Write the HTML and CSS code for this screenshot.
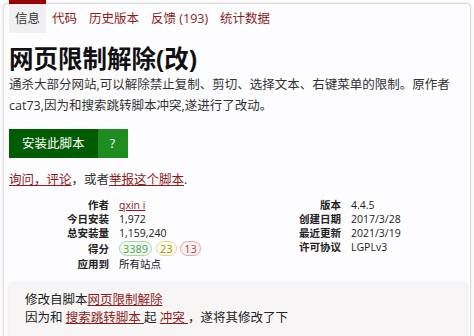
FILE: index.html
```html
<!DOCTYPE html>
<html lang="zh-CN">
<head>
    <meta charset="UTF-8">
    <title>网页限制解除(改)</title>
    <link rel="stylesheet" href="styles.css">
</head>
<body>
    <div class="card">
        <ul class="tabs">
            <li class="tab current">信息</li>
            <li class="tab"><a href="#">代码</a></li>
            <li class="tab"><a href="#">历史版本</a></li>
            <li class="tab"><a href="#">反馈 (193)</a></li>
            <li class="tab"><a href="#">统计数据</a></li>
        </ul>

        <h2 class="title">网页限制解除(改)</h2>
        <p class="desc">通杀大部分网站,可以解除禁止复制、剪切、选择文本、右键菜单的限制。原作者cat73,因为和搜索跳转脚本冲突,遂进行了改动。</p>

        <div class="install">
            <a class="install-link" href="#">安装此脚本</a>
            <a class="install-help" href="#">?</a>
        </div>

        <p class="feedback"><a href="#">询问，评论</a>，或者<a href="#">举报这个脚本</a>.</p>

        <div class="meta">
            <dl class="meta-col">
                <dt>作者</dt><dd><a href="#">qxin i</a></dd>
                <dt>今日安装</dt><dd>1,972</dd>
                <dt>总安装量</dt><dd>1,159,240</dd>
                <dt class="rating-row">得分</dt>
                <dd class="rating-row">
                    <span class="pill good">3389</span>
                    <span class="pill ok">23</span>
                    <span class="pill bad">13</span>
                </dd>
                <dt>应用到</dt><dd>所有站点</dd>
            </dl>
            <dl class="meta-col">
                <dt>版本</dt><dd>4.4.5</dd>
                <dt>创建日期</dt><dd>2017/3/28</dd>
                <dt>最近更新</dt><dd>2021/3/19</dd>
                <dt>许可协议</dt><dd>LGPLv3</dd>
            </dl>
        </div>

        <div class="extra">
            <p>修改自脚本<a href="#">网页限制解除</a></p>
            <p>因为和 <a href="#">搜索跳转脚本 </a>起 <a href="#">冲突 </a>，遂将其修改了下</p>
        </div>
    </div>
</body>
</html>
```

FILE: styles.css
```css
* {
    margin: 0;
    padding: 0;
    box-sizing: border-box;
}

body {
    font-family: "Open Sans", "Noto Sans CJK SC", sans-serif;
    font-size: 12.5px;
    color: #333;
    background: #fff;
    height: 336px;
    overflow: hidden;
}

a {
    color: #8a1c1c;
}

.card {
    margin: 3px 0 0 3px;
    width: 468px;
    height: 360px;
    border: 1px solid #dcdcdc;
    border-radius: 4px;
    background: #fdfcfe;
    box-shadow: 0 0 4px #e4e4e4;
    padding: 0 5px;
}

.tabs {
    list-style: none;
    display: flex;
    margin-top: -4px;
}

.tab {
    padding: 0 6px;
    height: 33px;
    line-height: 30px;
    border-top: 4px solid transparent;
}

.tab a {
    text-decoration: none;
}

.tab.current {
    border-top-color: #990000;
    background: #f0eff1;
    color: #333;
}

.title {
    font-size: 24.5px;
    font-weight: bold;
    color: #111;
    line-height: 30px;
    margin-top: 11px;
}

.desc {
    line-height: 21px;
    margin-top: 0;
}

.install {
    display: flex;
    margin-top: 13px;
    height: 29px;
}

.install-link,
.install-help {
    color: #fff;
    text-decoration: none;
    line-height: 29px;
}

.install-link {
    background: #005c00;
    padding: 0 13px;
}

.install-help {
    background: #1e8c1e;
    width: 30px;
    text-align: center;
}

.feedback {
    margin-top: 12px;
    line-height: 20px;
}

.meta {
    display: flex;
    margin-top: 8px;
    font-size: 10.5px;
    color: #222;
}

.meta-col {
    display: grid;
    grid-template-columns: 100px auto;
    column-gap: 10px;
    align-content: start;
    line-height: 14px;
}

.meta-col:first-child {
    width: 232px;
}

.meta-col dt {
    text-align: right;
    font-weight: bold;
}

.rating-row {
    line-height: 16px;
    padding-top: 1px;
}

.pill {
    display: inline-block;
    border: 1px solid;
    border-radius: 8px;
    padding: 0 3px;
    line-height: 13px;
    font-size: 11px;
    margin-right: 1px;
}

.pill.good {
    color: #55a055;
    background: #effaef;
    border-color: #a8d8a8;
}

.pill.ok {
    color: #a58a2a;
    background: #fffbe8;
    border-color: #e4d49a;
}

.pill.bad {
    color: #a54a4a;
    background: #fdf0f0;
    border-color: #dcaaaa;
}

.extra {
    margin-top: 13px;
    margin-left: 1px;
    width: 456px;
    height: 70px;
    background: #f7f5f6;
    box-shadow: 0 0 4px #e6dcdc;
    padding: 7px 15px;
    line-height: 18px;
    color: #222;
}
```
